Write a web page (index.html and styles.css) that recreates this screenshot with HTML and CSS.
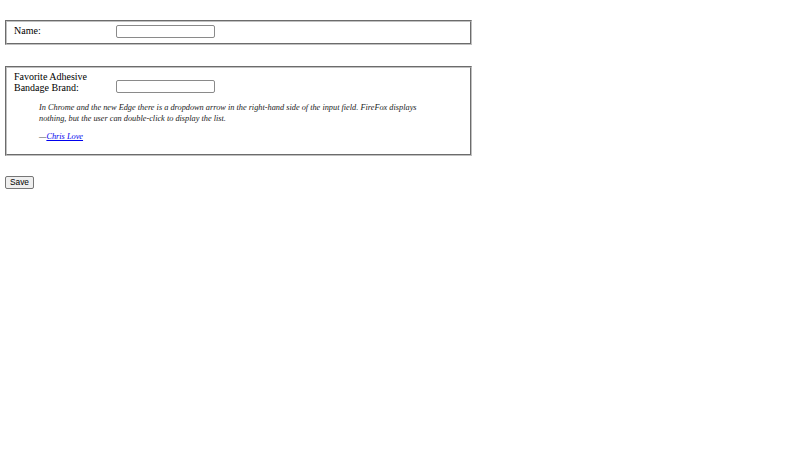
FILE: index.html
```html
<!DOCTYPE html>
<html lang="en">
<head>
<meta charset="utf-8">
<title>Form</title>
<link rel="stylesheet" href="styles.css">
</head>
<body>
<form class="form">
  <fieldset class="group group-first">
    <label class="label" for="name">Name:</label><input class="field" id="name" type="text">
  </fieldset>
  <fieldset class="group group-second">
    <label class="label" for="brand">Favorite Adhesive Bandage Brand:</label><input class="field field-raised" id="brand" type="text" list="brands">
    <datalist id="brands"><option value="Band-Aid"></option></datalist>
    <blockquote class="note">
      <p class="note-text">In Chrome and the new Edge there is a dropdown arrow in the right-hand side of the input field. FireFox displays nothing, but the user can double-click to display the list.</p>
      <p class="note-cite">—<a class="note-link" href="#">Chris Love</a></p>
    </blockquote>
  </fieldset>
  <button class="save" type="button">Save</button>
</form>
</body>
</html>
```
FILE: styles.css
```css
html, body {
  margin: 0;
  padding: 0;
  background: #fff;
}
body {
  font-family: "Liberation Serif", "Times New Roman", serif;
  font-size: 10px;
  color: #000;
}
.form {
  padding: 20px 0 0 5px;
}
.group {
  box-sizing: border-box;
  width: 467px;
  margin: 0 0 21px 0;
  padding: 3px 7px 5px;
  border: 2px groove #c0c0c0;
  line-height: 11px;
}
.group-first {
  height: 25px;
  line-height: 12px;
}
.label {
  display: inline-block;
  width: 102px;
  vertical-align: baseline;
}
.field {
  box-sizing: border-box;
  width: 99px;
  height: 13px;
  padding: 0 2px;
  margin: 0;
  border: 1px solid #8a8a8a;
  border-radius: 2px;
  font-family: "Liberation Sans", Arial, sans-serif;
  font-size: 8px;
  vertical-align: baseline;
  background: #fff;
}
.field-raised {
  vertical-align: 2px;
}
.group-second {
  padding-bottom: 12px;
  margin-bottom: 20px;
}
.note {
  margin: 9px 25px 0 25px;
  font-size: 8.3px;
  line-height: 11px;
  font-style: italic;
  color: #222;
}
.note-text {
  margin: 0 0 7px 0;
}
.note-cite {
  margin: 0;
}
.note-link {
  color: #0000ee;
  text-decoration: underline;
}
.save {
  display: block;
  box-sizing: border-box;
  height: 13px;
  padding: 0 4px;
  margin: 0;
  border: 1px solid #767676;
  border-radius: 2px;
  background: #efefef;
  font-family: "Liberation Sans", Arial, sans-serif;
  font-size: 8.3px;
  line-height: 11px;
  color: #000;
}
```
